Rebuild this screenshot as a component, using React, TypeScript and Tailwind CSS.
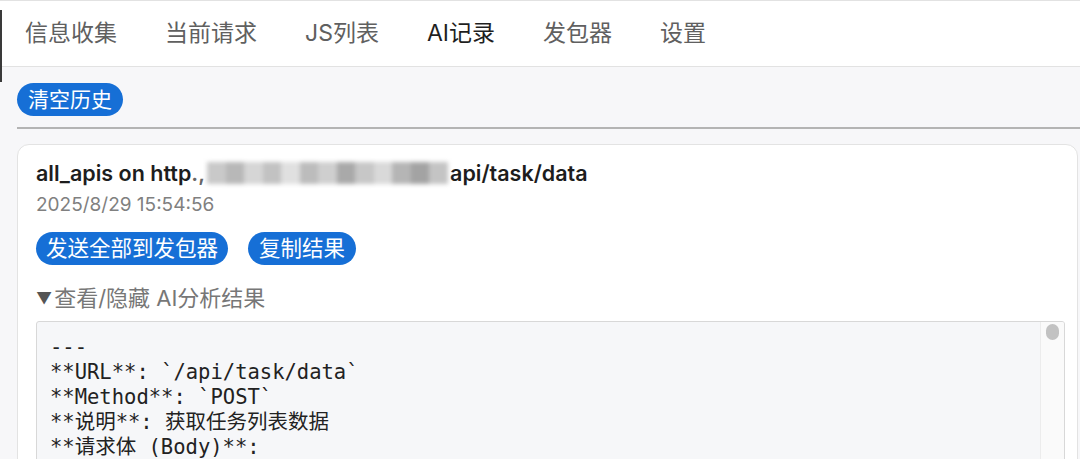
const tabs = ['信息收集', '当前请求', 'JS列表', 'AI记录', '发包器', '设置']

const codeLines = [
  '---',
  '**URL**: `/api/task/data`',
  '**Method**: `POST`',
  '**说明**: 获取任务列表数据',
  '**请求体 (Body)**:',
  '```json',
  '{',
]

// pixelated blur over the masked host name
const blurBlocks = ['#c9c9c9', '#b8b8b8', '#d6d6d6', '#c2c2c2', '#e0e0e0', '#bcbcbc', '#cfcfcf', '#a9a9a9', '#c7c7c7', '#d9d9d9', '#b5b5b5', '#a3a3a3', '#c4c4c4']

export default function App() {
  return (
    <div
      className="relative h-[459px] w-[1080px] overflow-hidden bg-[#f7f7f9]"
      style={{ fontFamily: 'Inter, "Noto Sans CJK SC", sans-serif' }}
    >
      {/* window edge */}
      <div className="absolute left-0 top-[10px] h-[72px] w-[2px] bg-[#3a3a3a]" />

      {/* Tabs */}
      <div className="flex h-[67px] items-center border-t border-b border-[#e2e2e2] bg-white pl-px">
        {tabs.map((t) => (
          <div
            key={t}
            className={`px-6 text-[23px] leading-none ${t === 'AI记录' ? 'text-[#1f1f1f]' : 'text-[#606060]'}`}
          >
            {t}
          </div>
        ))}
      </div>

      <div className="pl-[17px]">
        <div className="pt-[16px] pb-[11px]">
          <button className="h-[33px] rounded-full bg-[#166fd6] px-[11px] text-[21px] leading-none text-white">
            清空历史
          </button>
        </div>
        <div className="h-[2px] bg-[#b4b4b4]" />

        {/* Record card */}
        <div className="mt-[15px] mr-[2px] rounded-[12px] border border-[#e3e3e3] bg-white pt-[14px] pl-[18px] pr-[12px]">
          <div className="flex items-center text-[21.5px] font-semibold leading-[28px] text-[#1d1d1d]">
            <span>all_apis on http</span>
            <span className="text-[#666]">.,</span>
            <span className="mx-[2px] flex h-[22px] w-[241px] blur-[2px]">
              {blurBlocks.map((c, i) => (
                <span key={i} className="h-full flex-1" style={{ backgroundColor: c }} />
              ))}
            </span>
            <span>api/task/data</span>
          </div>
          <div className="mt-[5px] text-[19px] leading-[26px] text-[#808080]">2025/8/29 15:54:56</div>
          <div className="mt-[14px] flex gap-[20px]">
            <button className="h-[33px] rounded-full bg-[#166fd6] px-[10px] text-[21.5px] leading-none text-white">
              发送全部到发包器
            </button>
            <button className="h-[33px] rounded-full bg-[#166fd6] px-[11px] text-[21.5px] leading-none text-white">
              复制结果
            </button>
          </div>
          <div className="mt-[19px] flex items-center text-[22px] leading-[28px] text-[#777]">
            <span className="mr-[2px] text-[16px] text-[#555]">▼</span>查看/隐藏 AI分析结果
          </div>

          <div className="relative mt-[9px] h-[200px] overflow-hidden rounded-t-[3px] border border-[#d8d8d8] bg-[#f6f7f9]">
            <pre
              className="pt-[13px] pl-[13px] text-[20.5px] leading-[25px] text-[#222]"
              style={{ fontFamily: '"DejaVu Sans Mono", "Noto Sans CJK SC", monospace' }}
            >
              {codeLines.join('\n')}
            </pre>
            {/* scrollbar */}
            <div className="absolute right-0 top-0 h-full w-[24px] border-l border-[#ececec] bg-[#fafafa]">
              <div className="mx-auto mt-[2px] h-[16px] w-[13px] rounded-full bg-[#c2c2c2]" />
            </div>
          </div>
        </div>
      </div>
    </div>
  )
}
